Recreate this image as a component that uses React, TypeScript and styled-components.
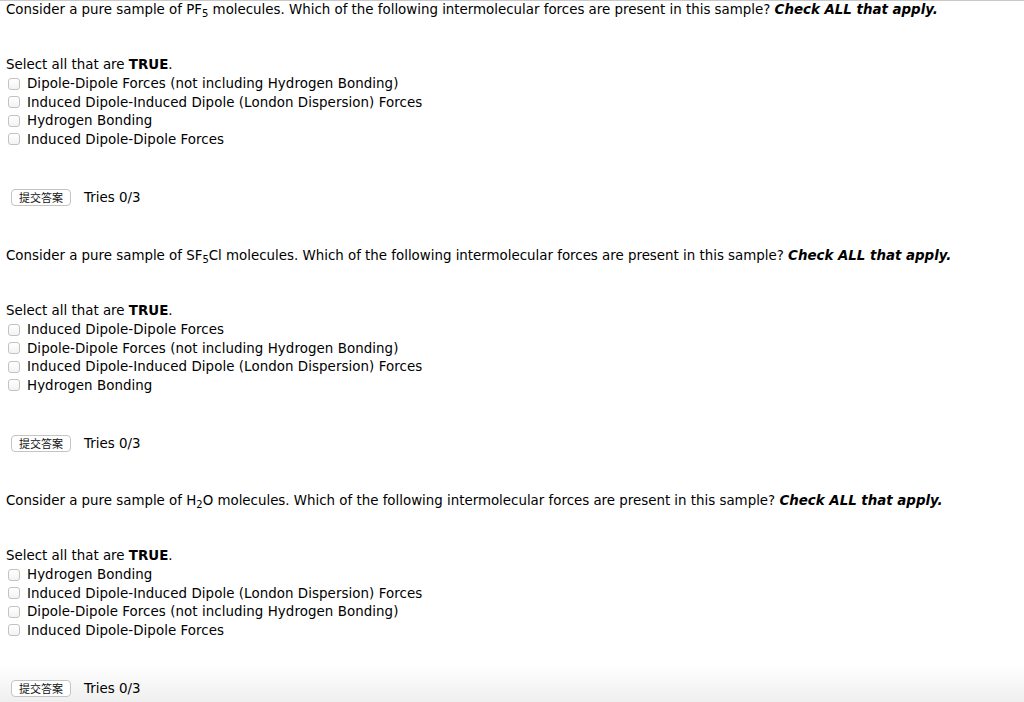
import React from "react";
import styled, { createGlobalStyle } from "styled-components";

const GlobalStyle = createGlobalStyle`
  html, body {
    margin: 0;
    padding: 0;
  }
  body {
    min-height: 702px;
    background: linear-gradient(to bottom, #ffffff 0, #ffffff 664px, #efefef 702px);
    font-family: "DejaVu Sans", Verdana, sans-serif;
    font-size: 13.4px;
    color: #000;
  }
`;

const Page = styled.div`
  border-top: 1px solid #c8c8c8;
  padding: 0 0 0 6px;
`;

const Block = styled.div`
  height: 245px;
  &:first-child {
    height: 246px;
  }
`;

const Question = styled.p`
  margin: 0;
  line-height: 18px;
  height: 18px;
  white-space: nowrap;
  letter-spacing: -0.01px;

  strong {
    font-weight: bold;
    font-style: italic;
  }
`;

const Sub = styled.sub`
  font-size: 10px;
  line-height: 0;
  vertical-align: -3px;
`;

const Prompt = styled.div`
  margin-top: 37px;
  line-height: 18.5px;
`;

const OptionList = styled.div`
  display: flex;
  flex-direction: column;
  letter-spacing: 0.06px;
`;

const Option = styled.label`
  display: flex;
  align-items: center;
  height: 18.5px;
  gap: 7px;
  padding-left: 2px;
`;

const Box = styled.span`
  width: 10px;
  height: 10px;
  border: 1px solid #c2c2c2;
  border-radius: 3px;
  background: linear-gradient(#ffffff, #f3f3f3);
  flex: none;
`;

const SubmitRow = styled.div`
  display: flex;
  align-items: center;
  gap: 13px;
  margin-top: 40px;
  padding-left: 5px;
`;

const Submit = styled.button`
  font-family: "Noto Sans CJK SC", sans-serif;
  font-size: 11px;
  line-height: 15px;
  height: 17px;
  padding: 0 7px;
  border: 1px solid #c4c4c4;
  border-radius: 4px;
  background: #fff;
  color: #111;
`;

const Tries = styled.span`
  line-height: 18px;
`;

type Q = {
  formula: React.ReactNode;
  options: string[];
};

const DD = "Dipole-Dipole Forces (not including Hydrogen Bonding)";
const LD = "Induced Dipole-Induced Dipole (London Dispersion) Forces";
const HB = "Hydrogen Bonding";
const ID = "Induced Dipole-Dipole Forces";

const questions: Q[] = [
  { formula: <>PF<Sub>5</Sub></>, options: [DD, LD, HB, ID] },
  { formula: <>SF<Sub>5</Sub>Cl</>, options: [ID, DD, LD, HB] },
  { formula: <>H<Sub>2</Sub>O</>, options: [HB, LD, DD, ID] },
];

export default function App() {
  return (
    <Page>
      <GlobalStyle />
      {questions.map((q, i) => (
        <Block key={i}>
          <Question>
            Consider a pure sample of {q.formula} molecules. Which of the following
            intermolecular forces are present in this sample? <strong>Check ALL that apply.</strong>
          </Question>
          <Prompt>
            Select all that are <b>TRUE</b>.
          </Prompt>
          <OptionList>
            {q.options.map((o) => (
              <Option key={o}>
                <Box />
                {o}
              </Option>
            ))}
          </OptionList>
          <SubmitRow>
            <Submit>提交答案</Submit>
            <Tries>Tries 0/3</Tries>
          </SubmitRow>
        </Block>
      ))}
    </Page>
  );
}
